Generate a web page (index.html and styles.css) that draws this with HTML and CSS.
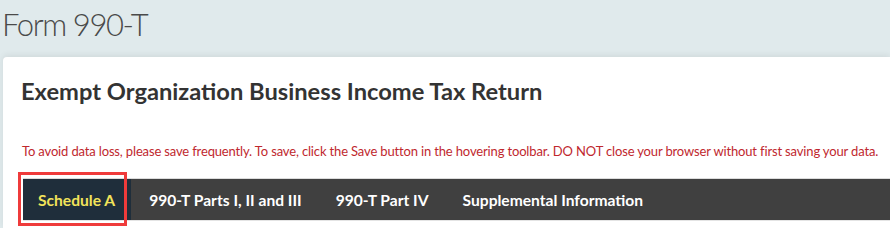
FILE: index.html
```html
<!DOCTYPE html>
<html lang="en">
  <head>
    <title>Form 990-T</title>
    <link rel="stylesheet" href="styles.css">
  </head>
  <body>
    <h1 class="page-title">Form 990-T</h1>

    <div class="form-card">
      <h2 class="form-heading">Exempt Organization Business Income Tax Return</h2>

      <p class="save-warning">
        To avoid data loss, please save frequently. To save, click the Save button in the hovering toolbar. DO NOT close your browser without first saving your data.
      </p>

      <ul class="tab-bar">
        <li class="tab active">Schedule A</li>
        <li class="tab">990-T Parts I, II and III</li>
        <li class="tab">990-T Part IV</li>
        <li class="tab">Supplemental Information</li>
      </ul>
      <div class="highlight-box"></div>
    </div>
  </body>
</html>
```

FILE: styles.css
```css
body {
  margin: 0;
  padding: 0;
  background: #e0eaec;
  font-family: 'Lato', 'Liberation Sans', sans-serif;
  overflow: hidden;
}

.page-title {
  margin: 0;
  height: 57px;
  padding-left: 2px;
  font-size: 31px;
  font-weight: 300;
  letter-spacing: -1.4px;
  line-height: 48px;
  color: #4a4a4a;
}

.form-card {
  position: relative;
  margin-left: 3px;
  height: 171px;
  padding-left: 18px;
  background: #fff;
  border-top-left-radius: 4px;
  box-shadow: 0 -2px 6px rgba(0, 0, 0, 0.07);
}

.form-heading {
  margin: 0;
  padding-top: 20px;
  font-size: 23.7px;
  font-weight: 700;
  line-height: 28px;
  color: #333;
}

.save-warning {
  margin: 0;
  padding-top: 37px;
  padding-left: 1px;
  font-size: 13px;
  letter-spacing: -0.15px;
  line-height: 18px;
  color: #c0282e;
  white-space: nowrap;
}

.tab-bar {
  list-style: none;
  margin: 18px 0 0 2px;
  padding: 0;
  display: flex;
  height: 41px;
  background: #404040;
  border-top: 1px solid #dcdcdc;
  border-bottom: 1px solid #e4e4e4;
}

.tab {
  display: flex;
  align-items: center;
  padding: 0 16px 0 15px;
  font-size: 15.6px;
  font-weight: 700;
  color: #fff;
}

.tab + .tab {
  padding-left: 18px;
}

.tab.active {
  background: #1f2e3b;
  color: #f2e35a;
}

.highlight-box {
  position: absolute;
  left: 15px;
  top: 115px;
  width: 103px;
  height: 48px;
  border: 3px solid #ef3b3b;
}
```
